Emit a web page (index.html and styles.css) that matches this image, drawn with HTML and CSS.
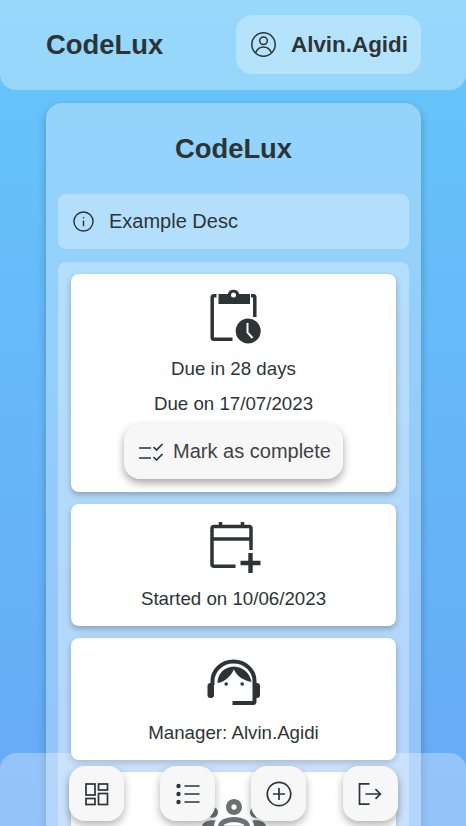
FILE: index.html
```html
<!DOCTYPE html>
<html lang="en">
<head>
<meta charset="utf-8">
<title>CodeLux</title>
<link rel="stylesheet" href="styles.css">
</head>
<body>
<header class="topbar">
  <div class="brand">CodeLux</div>
  <div class="user-chip">
    <svg class="user-icon line" viewBox="0 0 25 25"><circle cx="12.5" cy="12.5" r="11.7"/><circle cx="12.5" cy="8.800" r="3.800"/><path d="M4.600 20.800C6.300 16.600 9 14.900 12.500 14.900S18.700 16.600 20.400 20.800"/></svg>
    <span class="user-name">Alvin.Agidi</span>
  </div>
</header>
<main class="project">
  <h1 class="project-title">CodeLux</h1>
  <div class="desc">
    <svg class="info-icon line" viewBox="0 0 22 22"><circle cx="11" cy="11" r="10"/><path d="M11 10v6M11 6.200v1.300"/></svg>
    <span>Example Desc</span>
  </div>
  <section class="panel">
    <article class="card">
      <svg class="card-icon" viewBox="0 0 64 64">
        <path class="thick" d="M14.500 10.700H12a1.800 1.800 0 0 0-1.800 1.800V52.500a1.800 1.800 0 0 0 1.800 1.800H30.500M49 10.700h2a1.800 1.800 0 0 1 1.800 1.800V32"/>
        <path class="solid" d="M16.500 9H25.800a6 6 0 0 1 11.400 0H48V19H16.500z"/>
        <circle class="cut" cx="31.500" cy="10" r="2.500"/>
        <circle class="solid" cx="46.200" cy="46" r="12.500"/>
        <path class="hand" d="M45.500 38v9.300l5 5.700"/>
      </svg>
      <p class="card-line">Due in 28 days</p>
      <p class="card-line">Due on 17/07/2023</p>
      <button class="complete-btn" type="button">
        <svg class="check-icon" viewBox="0 0 25 18"><path d="M0 5h12M0 15h12M14.500 4l3 3 6-6M14.500 14l3 3 6-6"/></svg>
        Mark as complete
      </button>
    </article>
    <article class="card">
      <svg class="card-icon" viewBox="0 0 64 64"><path class="thick" d="M33.500 51.200H12a2 2 0 0 1-2-2V13.500a2 2 0 0 1 2-2h35a2 2 0 0 1 2 2V35M18.500 7v5M40.500 7v5M10 24h39"/><path class="plus" d="M38.500 48h20M48.500 38v20"/></svg>
      <p class="card-line">Started on 10/06/2023</p>
    </article>
    <article class="card">
      <svg class="card-icon" viewBox="0 0 64 64">
        <path class="band" d="M10.500 36V32A21 19.500 0 0 1 52.500 32V52.500a1.500 1.500 0 0 1-1.500 1.500H30.500"/>
        <rect class="solid" x="5.500" y="34" width="6.500" height="15" rx="3"/>
        <rect class="solid" x="51.500" y="34" width="6.500" height="15" rx="3"/>
        <path class="solid" d="M15.500 34C15.500 25 22 18 31.800 17.500C41 18 48 24 49.500 33C41 31.500 35 27 31.800 20.500C29 27 23 33 15.500 34Z"/>
        <circle class="solid" cx="24.200" cy="35" r="1.800"/>
        <circle class="solid" cx="40.200" cy="35" r="1.800"/>
      </svg>
      <p class="card-line">Manager: Alvin.Agidi</p>
    </article>
    <article class="card">
      <svg class="card-icon solid" viewBox="0 0 24 24"><path d="M4,13c1.100,0,2-0.900,2-2c0-1.100-0.900-2-2-2s-2,0.900-2,2C2,12.100,2.900,13,4,13z M5.130,14.100C4.760,14.040,4.390,14,4,14c-0.990,0-1.930,0.210-2.780,0.580C0.480,14.900,0,15.620,0,16.430V18l4.500,0v-1.610C4.500,15.560,4.730,14.780,5.130,14.100z M20,13c1.100,0,2-0.900,2-2c0-1.100-0.900-2-2-2s-2,0.900-2,2C18,12.100,18.900,13,20,13z M24,16.430c0-0.810-0.480-1.530-1.220-1.850C21.930,14.210,20.990,14,20,14c-0.390,0-0.760,0.040-1.130,0.100c0.400,0.680,0.630,1.460,0.630,2.290V18l4.500,0V16.430z M16.240,13.650c-1.170-0.520-2.610-0.900-4.240-0.900c-1.630,0-3.070,0.390-4.240,0.900C6.680,14.130,6,15.210,6,16.390V18h12v-1.610C18,15.210,17.320,14.130,16.240,13.650z M8.070,16c0.090-0.230,0.130-0.390,0.910-0.690c0.970-0.380,1.990-0.560,3.020-0.560s2.050,0.180,3.020,0.560c0.770,0.300,0.810,0.460,0.910,0.690H8.070z M12,8c0.550,0,1,0.450,1,1s-0.450,1-1,1s-1-0.450-1-1S11.450,8,12,8 M12,6c-1.660,0-3,1.340-3,3c0,1.660,1.340,3,3,3s3-1.340,3-3C15,7.340,13.660,6,12,6L12,6z"/></svg>
    </article>
  </section>
</main>
<nav class="bottombar">
  <button class="nav-btn" type="button" aria-label="Dashboard"><svg class="nav-icon line" viewBox="0 0 28 28"><rect x="4" y="4" width="9" height="11"/><rect x="4" y="18.500" width="9" height="6"/><rect x="16.500" y="4" width="9" height="6"/><rect x="16.500" y="13.500" width="9" height="11"/></svg></button>
  <button class="nav-btn" type="button" aria-label="List"><svg class="nav-icon line" viewBox="0 0 28 28"><path d="M10.500 6h15M10.500 14h15M10.500 22h15"/><circle class="dot" cx="4.500" cy="6" r="2.200"/><circle class="dot" cx="4.500" cy="14" r="2.200"/><circle class="dot" cx="4.500" cy="22" r="2.200"/></svg></button>
  <button class="nav-btn" type="button" aria-label="Add"><svg class="nav-icon line" viewBox="0 0 28 28"><circle cx="14" cy="14" r="11.700"/><path d="M14 8v12M8 14h12"/></svg></button>
  <button class="nav-btn" type="button" aria-label="Log out"><svg class="nav-icon line" viewBox="0 0 28 28"><path d="M13.500 3.800H3.500V24.200H13.500M9.500 14H24M19.500 9.200L24.300 14L19.500 18.800"/></svg></button>
</nav>
</body>
</html>
```
FILE: styles.css
```css
* { box-sizing: border-box; }
html, body { height: 100%; margin: 0; overflow: hidden; }
body {
  font-family: "Liberation Sans", Arial, sans-serif;
  color: #2d3436;
  background: linear-gradient(180deg, #66c6fa 0%, #66a9f6 100%);
}
.topbar {
  height: 90px;
  padding: 15px 45px 16px 46px;
  display: flex;
  align-items: center;
  justify-content: space-between;
  background: rgba(255, 255, 255, 0.32);
  border-radius: 0 0 16px 16px;
}
.brand { font-size: 27.4px; font-weight: 700; }
.user-chip {
  width: 185px;
  height: 59px;
  padding-left: 15px;
  display: flex;
  align-items: center;
  gap: 15px;
  background: rgba(255, 255, 255, 0.3);
  border-radius: 16px;
}
.user-icon { width: 25px; height: 25px; }
.user-name { font-size: 22.4px; font-weight: 700; }
.line { fill: none; stroke: #2d3436; stroke-width: 1.5; }
.dot { fill: #2d3436; stroke: none; }
.project {
  margin: 13px 45px 0 46px;
  padding: 0 12px;
  background: rgba(255, 255, 255, 0.3);
  border-radius: 16px;
  box-shadow: 0 4px 8px rgba(0, 0, 0, 0.25);
}
.project-title {
  margin: 0;
  height: 91px;
  display: flex;
  align-items: center;
  justify-content: center;
  font-size: 27.4px;
  font-weight: 700;
}
.desc {
  height: 55px;
  padding-left: 15px;
  display: flex;
  align-items: center;
  gap: 15px;
  font-size: 20px;
  background: rgba(255, 255, 255, 0.3);
  border-radius: 8px;
}
.info-icon { width: 21px; height: 21px; }
.panel {
  margin-top: 13px;
  padding: 12px 13px;
  display: flex;
  flex-direction: column;
  gap: 12px;
  background: rgba(255, 255, 255, 0.3);
  border-radius: 8px;
}
.card {
  padding: 13px 13px 10px;
  display: flex;
  flex-direction: column;
  align-items: center;
  background: #fff;
  border-radius: 8px;
  box-shadow: 0 3px 6px rgba(0, 0, 0, 0.25);
}
.card-icon { width: 64px; height: 64px; margin: -2px 0 2px; flex: none; }
.solid { fill: #2d3436; }
.cut { fill: #fff; }
.thick { fill: none; stroke: #2d3436; stroke-width: 3.5; }
.band { fill: none; stroke: #2d3436; stroke-width: 4; }
.plus { fill: none; stroke: #2d3436; stroke-width: 4.4; }
.hand { fill: none; stroke: #fff; stroke-width: 2; }
.card-line { margin: 0; height: 35px; line-height: 35px; font-size: 18.72px; }
.complete-btn {
  width: 219px;
  height: 55px;
  margin: 3px 0;
  padding: 0 0 0 3px;
  display: flex;
  align-items: center;
  justify-content: center;
  gap: 9px;
  font: 20px "Liberation Sans", Arial, sans-serif;
  color: #3e4347;
  background: #f7f7f7;
  border: 0;
  border-radius: 16px;
  box-shadow: 0 4px 8px rgba(0, 0, 0, 0.35);
}
.check-icon { width: 25px; height: 18px; fill: none; stroke: #2d3436; stroke-width: 1.7; }
.bottombar {
  position: fixed;
  left: 0;
  right: 0;
  bottom: 0;
  height: 73px;
  padding: 13px 0 0 0.6px;
  display: flex;
  justify-content: center;
  align-items: flex-start;
  gap: 36.25px;
  background: rgba(255, 255, 255, 0.3);
  border-radius: 16px 16px 0 0;
}
.nav-btn {
  width: 55px;
  height: 55px;
  padding: 0;
  display: flex;
  align-items: center;
  justify-content: center;
  background: #f7f7f7;
  border: 0;
  border-radius: 16px;
  box-shadow: 0 4px 8px rgba(0, 0, 0, 0.3);
}
.nav-icon { width: 28px; height: 28px; stroke-width: 1.7; }
```
